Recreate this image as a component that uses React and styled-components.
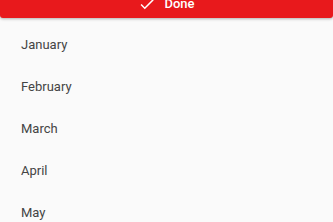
import React from 'react';
import styled, { createGlobalStyle } from 'styled-components';

const GlobalStyle = createGlobalStyle`
  html, body {
    margin: 0;
    padding: 0;
    background: #fafafa;
    font-family: Roboto, "Noto Sans", "Liberation Sans", sans-serif;
  }
`;

const months = ['January', 'February', 'March', 'April', 'May'];

const App = () => {
  return (
    <Page>
      <GlobalStyle />
      <DoneButton>
        <ButtonContent>
          <svg width='18' height='18' viewBox='0 0 24 24' fill='#fff'>
            <path d='M9 16.17L4.83 12l-1.42 1.41L9 19 21 7l-1.41-1.41z' />
          </svg>
          <ButtonLabel>Done</ButtonLabel>
        </ButtonContent>
      </DoneButton>

      <MonthList>
        {months.map((month) => (
          <MonthRow key={month}>{month}</MonthRow>
        ))}
      </MonthList>
    </Page>
  );
};

const Page = styled.div`
  display: flex;
  flex-direction: column;

  width: 333px;
  height: 222px;
  overflow: hidden;
  background: #fafafa;
`;

const DoneButton = styled.div`
  display: flex;
  align-items: center;
  justify-content: center;
  flex-shrink: 0;

  height: 18px;
  overflow: hidden;
  background-color: #e8191c;
  border-radius: 0 0 3px 3px;
  box-shadow: 0 1px 3px rgba(0, 0, 0, 0.3);
`;

const ButtonContent = styled.div`
  display: flex;
  align-items: center;
  gap: 8px;

  margin-bottom: 10px;
`;

const ButtonLabel = styled.span`
  color: #fff;
  font-size: 13px;
  font-weight: 500;
  line-height: 18px;
`;

const MonthList = styled.div`
  display: flex;
  flex-direction: column;

  padding-top: 5px;
`;

const MonthRow = styled.div`
  display: flex;
  align-items: center;

  height: 42px;
  padding-left: 21px;

  color: #444;
  font-size: 13px;
`;

export default App;
